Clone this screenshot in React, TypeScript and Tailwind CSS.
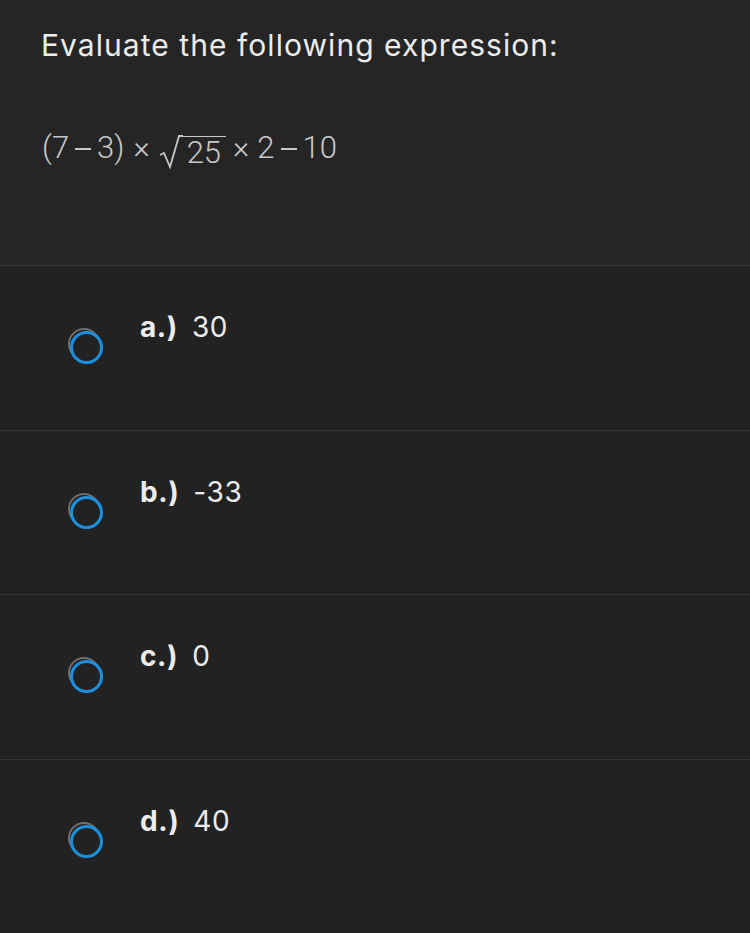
import React from "react";

const options = [
  { k: "a.)", v: "30" },
  { k: "b.)", v: "-33" },
  { k: "c.)", v: "0" },
  { k: "d.)", v: "40" },
];

function Minus() {
  return <span className="inline-block w-[16px] h-[2px] bg-[#c8c8c8] mx-[6px] mt-[2px]" />;
}

export default function App() {
  return (
    <div className="w-[750px] h-[933px] bg-[#222222] overflow-hidden" style={{ fontFamily: "Inter, 'Open Sans', sans-serif" }}>
      <div className="h-[265px] bg-[#252525] pt-[25px] px-[41px]">
        <div className="text-[30px] leading-[40px] text-[#ececec] tracking-[1.05px]">Evaluate the following expression:</div>
        <div
          className="mt-[62px] flex items-center text-[31px] leading-[36px] text-[#c8c8c8] font-light"
          style={{ fontFamily: "Roboto, 'Liberation Sans', sans-serif" }}
        >
          <span className="ml-[1px]">(7</span>
          <Minus />
          <span>3)</span>
          <span className="mx-[9px]">×</span>
          <span className="relative flex items-end">
            <svg width="24" height="36" viewBox="0 0 24 36" className="mt-[6px]">
              <path d="M1 22 L5 20 L11 34 L20 3 L24 3" fill="none" stroke="#c8c8c8" strokeWidth="1.8" />
            </svg>
            <span className="border-t-[1.8px] border-[#c8c8c8] leading-[32px] pl-[4px] pr-[5px]">25</span>
          </span>
          <span className="ml-[7px] mr-[8px]">×</span>
          <span>2</span>
          <Minus />
          <span>10</span>
        </div>
      </div>
      {options.map((o) => (
        <div key={o.k} className="h-[164.5px] border-t border-[#353535] relative">
          <div className="absolute left-[140px] top-[40px] flex items-baseline text-[28px] text-[#ececec] tracking-[0.6px]">
            <span className="font-bold mr-[14px]">{o.k}</span>
            <span>{o.v}</span>
          </div>
          <div className="absolute left-[69px] top-[65px] w-[34px] h-[34px]">
            <div className="absolute left-[-1px] top-[-3px] w-[32px] h-[32px] rounded-full border-[2.5px] border-[#6e6e6e]" />
            <div className="absolute left-[1px] top-[0px] w-[33px] h-[33px] rounded-full border-[3.5px] border-[#1b8fe0] bg-[#222222]" />
          </div>
        </div>
      ))}
    </div>
  );
}
